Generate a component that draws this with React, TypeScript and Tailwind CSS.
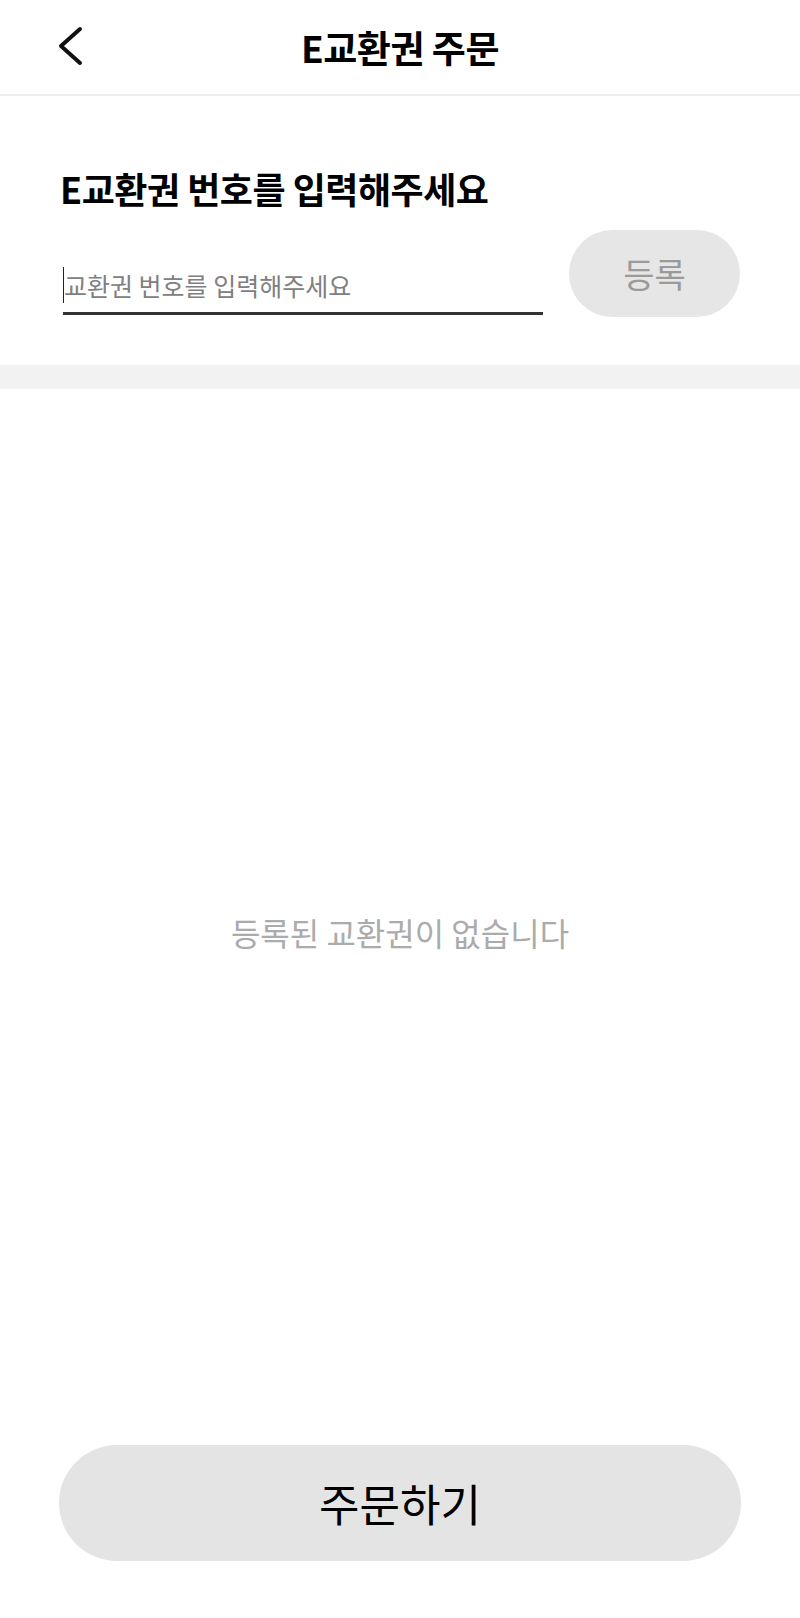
import { useState } from "react";

const font = { fontFamily: '"Noto Sans CJK KR", "Noto Sans", sans-serif' };

export default function App() {
  const [code, setCode] = useState("");

  return (
    <div className="flex h-[1618px] w-full flex-col bg-white text-black" style={font}>
      {/* header */}
      <header className="relative flex h-[96px] shrink-0 items-center justify-center border-b-2 border-[#eeeeee]">
        <button type="button" aria-label="뒤로" className="absolute left-[52px] top-[22px] p-1">
          <svg width="28" height="42" viewBox="0 0 28 42" fill="none">
            <path d="M24 3 L5 20 L24 37" stroke="#111" strokeWidth="4" strokeLinecap="round" strokeLinejoin="round" />
          </svg>
        </button>
        <h1 className="text-[37px] font-bold leading-none tracking-[-0.5px]">E교환권 주문</h1>
      </header>

      {/* voucher input */}
      <section className="shrink-0 px-[60px] pb-[48px] pt-[72px]">
        <h2 className="text-[36px] font-bold leading-[40px] tracking-[-0.5px]">E교환권 번호를 입력해주세요</h2>
        <div className="mt-[22px] flex items-center gap-[26px]">
          <div className="ml-[3px] flex flex-1 items-center border-b-[3px] border-[#333333] pt-[30px]">
            <span className="mb-[4px] h-[36px] w-px shrink-0 bg-[#222222]" aria-hidden />
            <input
              value={code}
              onChange={(e) => setCode(e.target.value)}
              placeholder="교환권 번호를 입력해주세요"
              className="h-[50px] w-full bg-transparent pb-[4px] text-[25px] text-black outline-none placeholder:text-[#808080]"
              style={font}
            />
          </div>
          <button
            type="button"
            className="h-[87px] w-[171px] shrink-0 rounded-full bg-[#e6e6e6] text-[34px] text-[#9a9a9a]"
          >
            등록
          </button>
        </div>
      </section>

      <div className="h-[24px] shrink-0 bg-[#f2f2f2]" />

      {/* empty list */}
      <main className="flex flex-1 items-center justify-center pt-[30px]">
        <p className="text-[32px] text-[#ababab]">등록된 교환권이 없습니다</p>
      </main>

      {/* order */}
      <div className="shrink-0 px-[59px] pb-[57px]">
        <button
          type="button"
          className="h-[116px] w-full rounded-full bg-[#e4e4e4] text-[44px] text-black"
        >
          주문하기
        </button>
      </div>
    </div>
  );
}
